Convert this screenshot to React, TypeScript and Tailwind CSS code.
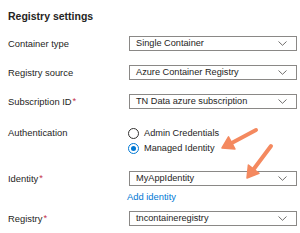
import React from "react";

const FONT = { fontFamily: '"Liberation Sans", Arial, sans-serif' };

function Chevron() {
  return (
    <svg width="9" height="5" viewBox="0 0 9 5" className="shrink-0">
      <path d="M0.5 0.5 L4.5 4.3 L8.5 0.5" fill="none" stroke="#605e5c" strokeWidth="0.9" />
    </svg>
  );
}

function Select({ value }: { value: string }) {
  return (
    <div className="w-[168px] h-[15px] border border-[#8a8886] bg-white flex items-center justify-between pl-[6px] pr-[9px]">
      <span className="text-[9.2px] text-[#252423] leading-none">{value}</span>
      <Chevron />
    </div>
  );
}

function Label({ text, required }: { text: string; required?: boolean }) {
  return (
    <div className="w-[121px] text-[9.4px] text-[#252423] leading-none">
      {text}
      {required && <span className="text-[#c4314b] ml-[1px] relative -top-[1px]">*</span>}
    </div>
  );
}

function Radio({ label, checked }: { label: string; checked?: boolean }) {
  return (
    <div className="flex items-center h-[15px] gap-[5px]">
      <div className={`w-[11px] h-[11px] rounded-full border flex items-center justify-center ${checked ? "border-[#0078d4]" : "border-[#323130]"}`}>
        {checked && <div className="w-[5px] h-[5px] rounded-full bg-[#0078d4]" />}
      </div>
      <span className="text-[9.2px] text-[#252423] leading-none">{label}</span>
    </div>
  );
}

export default function App() {
  return (
    <div className="relative w-[300px] h-[233px] bg-white overflow-hidden" style={FONT}>
      <div className="pl-[8px] pt-[9px] flex flex-col">
        <h2 className="text-[10.5px] font-bold text-[#252423] leading-[14px]">Registry settings</h2>

        <div className="flex items-center mt-[13px]">
          <Label text="Container type" />
          <Select value="Single Container" />
        </div>
        <div className="flex items-center mt-[14px]">
          <Label text="Registry source" />
          <Select value="Azure Container Registry" />
        </div>
        <div className="flex items-center mt-[14px]">
          <Label text="Subscription ID" required />
          <Select value="TN Data azure subscription" />
        </div>

        <div className="flex mt-[17px]">
          <div className="pt-[2px]">
            <Label text="Authentication" />
          </div>
          <div className="flex flex-col -ml-[1px]">
            <Radio label="Admin Credentials" />
            <Radio label="Managed Identity" checked />
          </div>
        </div>

        <div className="flex items-center mt-[15px]">
          <Label text="Identity" required />
          <Select value="MyAppIdentity" />
        </div>
        <div className="flex mt-[4px]">
          <div className="w-[119px]" />
          <a className="text-[9.4px] text-[#0078d4] leading-[14px]">Add identity</a>
        </div>
        <div className="flex items-center mt-[7px]">
          <Label text="Registry" required />
          <Select value="tncontaineregistry" />
        </div>
      </div>

      <svg className="absolute left-0 top-0 pointer-events-none" width="300" height="233">
        <line x1="256" y1="130" x2="231.7" y2="142.9" stroke="#f4895f" strokeWidth="4" strokeLinecap="round" />
        <polygon points="222,148 235,149 228.5,136.8" fill="#f4895f" stroke="#f4895f" strokeWidth="1.5" strokeLinejoin="round" />
        <line x1="271" y1="146" x2="253.6" y2="169.2" stroke="#f4895f" strokeWidth="4" strokeLinecap="round" />
        <polygon points="247,178 259,173.4 248.4,165" fill="#f4895f" stroke="#f4895f" strokeWidth="1.5" strokeLinejoin="round" />
      </svg>
    </div>
  );
}
